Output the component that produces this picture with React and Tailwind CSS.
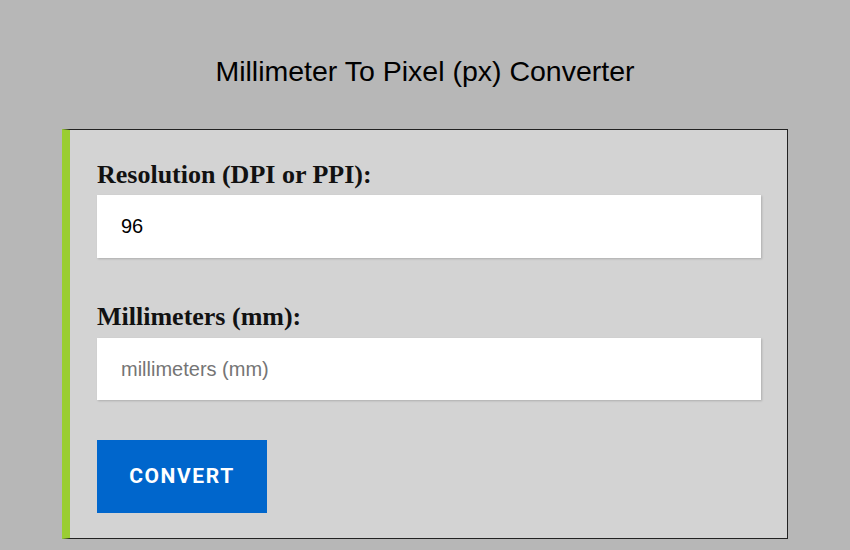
import React, { useState } from "react";

const App = () => {
    const [dpi, setDpi] = useState("96");
    const [mm, setMm] = useState("");

    return (
        <div className="min-h-[550px] w-full bg-[#b7b7b7] pt-[53px]">
            <h1 className="text-center text-[28.5px] leading-[36px] text-black font-['Liberation_Sans',Arial,sans-serif]">
                Millimeter To Pixel (px) Converter
            </h1>

            <div className="mx-[62px] mt-[40px] flex border-l-[8px] border-l-[#9acd32] border-y border-r border-y-[#222] border-r-[#222] bg-[#d3d3d3] pl-[27px] pr-[26px] pt-[28px] pb-[25px]">
                <div className="flex-1 flex flex-col">
                    <label className="text-[26px] leading-[34px] font-bold text-[#111] font-['Liberation_Serif','Times_New_Roman',serif]">
                        Resolution (DPI or PPI):
                    </label>
                    <input
                        type="text"
                        value={dpi}
                        onChange={(e) => setDpi(e.target.value)}
                        className="mt-[3px] h-[63px] w-full bg-white px-[24px] text-[20px] text-black outline-none shadow-[1px_1px_2px_rgba(0,0,0,0.18)] font-['Liberation_Sans',Arial,sans-serif]"
                    />

                    <label className="mt-[42px] text-[26px] leading-[34px] font-bold text-[#111] font-['Liberation_Serif','Times_New_Roman',serif]">
                        Millimeters (mm):
                    </label>
                    <input
                        type="text"
                        value={mm}
                        placeholder="millimeters (mm)"
                        onChange={(e) => setMm(e.target.value)}
                        className="mt-[4px] h-[62px] w-full bg-white px-[24px] text-[20px] text-black placeholder:text-[#757575] outline-none shadow-[1px_1px_2px_rgba(0,0,0,0.18)] font-['Liberation_Sans',Arial,sans-serif]"
                    />

                    <div className="mt-[40px]">
                        <button className="h-[73px] w-[170px] bg-[#0066cc] text-white text-[21px] font-bold tracking-[1.6px] font-['Roboto','Liberation_Sans',sans-serif]">
                            CONVERT
                        </button>
                    </div>
                </div>
            </div>
        </div>
    );
};

export default App;
